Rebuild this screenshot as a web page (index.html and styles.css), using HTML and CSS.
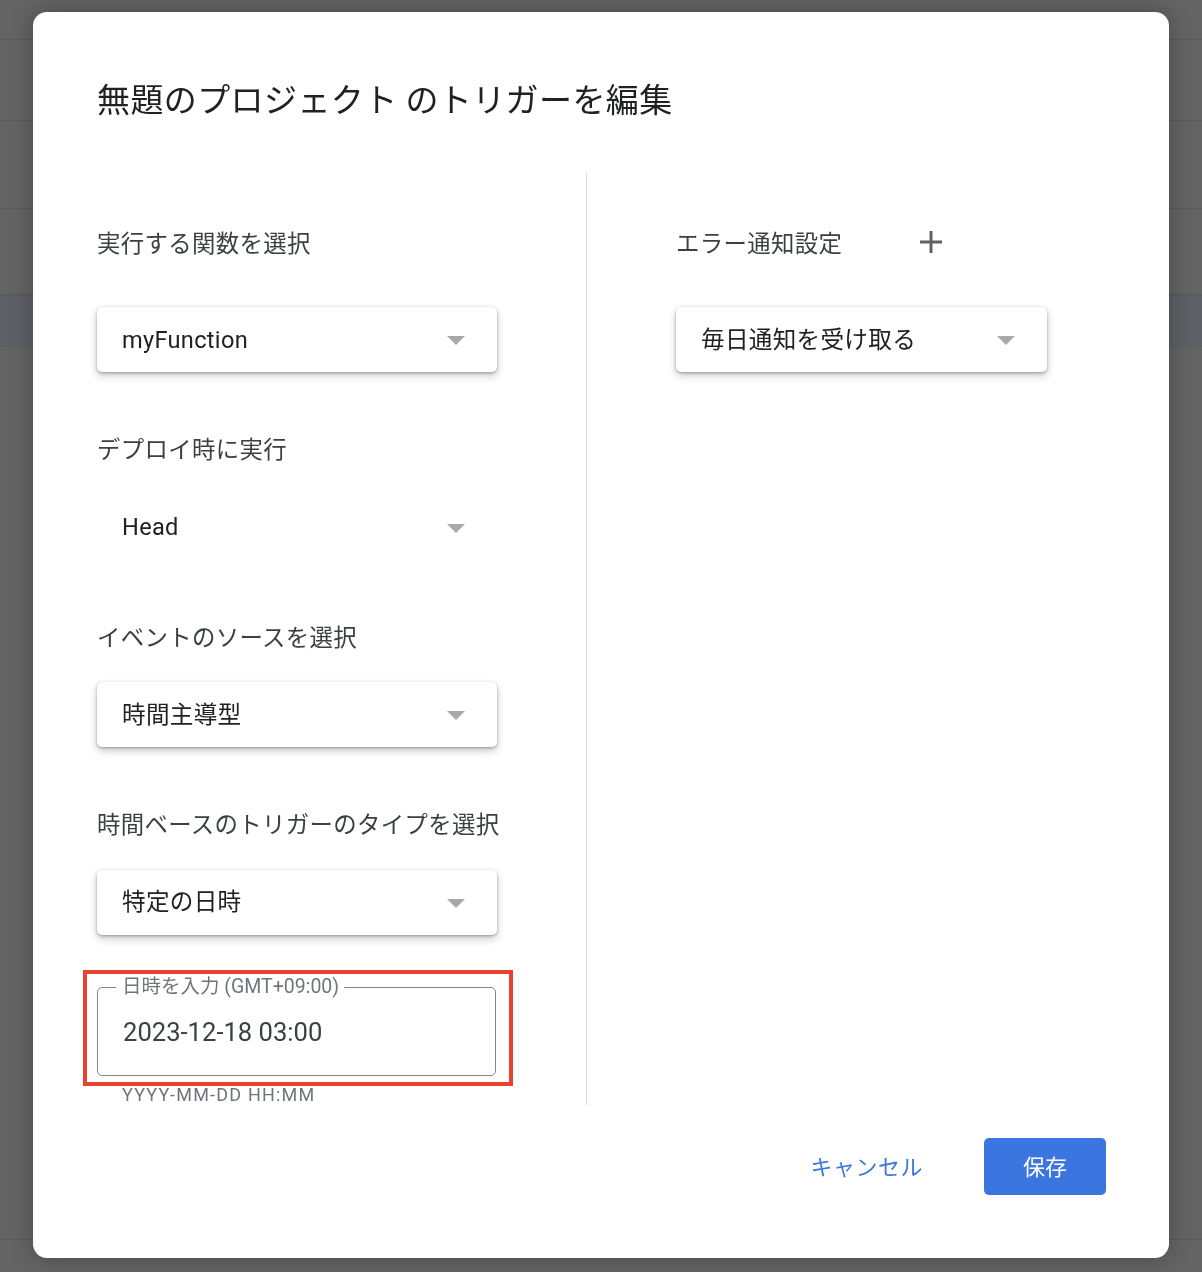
FILE: index.html
```html
<!DOCTYPE html>
<html lang="ja">
<head>
<meta charset="utf-8">
<title>トリガーを編集</title>
<link rel="stylesheet" href="styles.css">
</head>
<body>
<div class="page-bg">
  <div class="bg-row r1"></div>
  <div class="bg-row r2"></div>
  <div class="bg-row r3"></div>
  <div class="bg-row r4"></div>
  <div class="bg-row band"></div>
  <div class="bg-row r5"></div>
  <div class="bg-row r6"></div>
</div>

<div class="overlay">
  <div class="dialog">
    <h1 class="title">無題のプロジェクト のトリガーを編集</h1>
    <div class="body">
      <div class="col col-left">
        <div class="label first">実行する関数を選択</div>
        <div class="select raised"><span class="select-text">myFunction</span><span class="arrow"></span></div>

        <div class="label">デプロイ時に実行</div>
        <div class="select flat"><span class="select-text">Head</span><span class="arrow"></span></div>

        <div class="label">イベントのソースを選択</div>
        <div class="select raised"><span class="select-text">時間主導型</span><span class="arrow"></span></div>

        <div class="label">時間ベースのトリガーのタイプを選択</div>
        <div class="select raised"><span class="select-text">特定の日時</span><span class="arrow"></span></div>

        <div class="outlined">
          <div class="highlight"></div>
          <span class="notch-label">日時を入力 (GMT+09:00)</span>
          <div class="value">2023-12-18 03:00</div>
        </div>
        <div class="helper">YYYY-MM-DD HH:MM</div>
      </div>
      <div class="divider"></div>
      <div class="col col-right">
        <div class="label-row">
          <span class="label-inline">エラー通知設定</span>
          <svg class="plus" width="22" height="22" viewBox="0 0 22 22" aria-hidden="true"><path d="M11 0v22M0 11h22" stroke="#5f6368" stroke-width="3" fill="none"/></svg>
        </div>
        <div class="select raised narrow"><span class="select-text">毎日通知を受け取る</span><span class="arrow"></span></div>
      </div>
    </div>
    <div class="footer">
      <button class="btn btn-text">キャンセル</button>
      <button class="btn btn-primary">保存</button>
    </div>
  </div>
</div>
</body>
</html>
```

FILE: styles.css
```css
* { box-sizing: border-box; }

html, body {
  margin: 0;
  padding: 0;
  width: 1202px;
  height: 1272px;
  overflow: hidden;
}

body {
  background: #646464;
  font-family: Roboto, "Noto Sans CJK JP", sans-serif;
  color: #202124;
}

/* dimmed page underneath */
.page-bg {
  display: flex;
  flex-direction: column;
  width: 100%;
}
.bg-row { background: #646464; border-bottom: 1px solid #595959; }
.r1 { height: 40px; }
.r2 { height: 81px; }
.r3 { height: 88px; }
.r4 { height: 86px; }
.band { height: 52px; background: #5d6065; border-top: 1px solid #575a5e; border-bottom: 1px solid #5a5d61; }
.r5 { height: 893px; }
.r6 { height: 40px; border-bottom: none; }

/* modal overlay */
.overlay {
  position: fixed;
  inset: 0;
  display: flex;
  align-items: flex-start;
  justify-content: flex-start;
  padding: 12px 0 0 33px;
}

.dialog {
  width: 1136px;
  height: 1246px;
  background: #ffffff;
  border-radius: 14px;
  box-shadow: 0 0 24px rgba(0, 0, 0, 0.28);
  padding: 66px 63px 0 64px;
  display: flex;
  flex-direction: column;
}

.title {
  margin: 0;
  font-family: "Noto Sans CJK JP", sans-serif;
  font-weight: 400;
  font-size: 33px;
  line-height: 40px;
  height: 40px;
  color: #202124;
  letter-spacing: 0.4px;
}

.body {
  margin-top: 55px;
  display: flex;
  height: 932px;
}

.col-left {
  width: 489px;
  display: flex;
  flex-direction: column;
  padding-top: 53px;
}

.divider {
  width: 1px;
  background: #dadce0;
  align-self: stretch;
}

.col-right {
  padding-left: 89px;
  padding-top: 53px;
  display: flex;
  flex-direction: column;
}

.label {
  font-family: "Noto Sans CJK JP", sans-serif;
  font-size: 23.4px;
  line-height: 32px;
  height: 32px;
  color: #3c4043;
  letter-spacing: 0.35px;
  margin-top: 60px;
  margin-bottom: 30.5px;
}
.label.first { margin-top: 0; margin-bottom: 49px; }

.label-row {
  display: flex;
  align-items: center;
  height: 32px;
  margin-bottom: 49px;
}
.label-inline {
  font-family: "Noto Sans CJK JP", sans-serif;
  font-size: 23.4px;
  line-height: 32px;
  color: #3c4043;
  letter-spacing: 0.35px;
}
.plus { margin-left: 78px; }

.select {
  width: 400px;
  height: 65px;
  display: flex;
  align-items: center;
  justify-content: space-between;
  padding: 0 32px 0 25px;
  border-radius: 5px;
  background: #ffffff;
  flex: none;
}
.select.raised {
  box-shadow: 0 1px 3px rgba(0, 0, 0, 0.3), 0 4px 9px rgba(0, 0, 0, 0.2);
}
.select.narrow { width: 371px; }

.select-text {
  font-family: Roboto, "Noto Sans CJK JP", sans-serif;
  font-size: 23.6px;
  line-height: 32px;
  color: #202124;
  letter-spacing: 0.3px;
}

.arrow {
  width: 0;
  height: 0;
  border-left: 9px solid transparent;
  border-right: 9px solid transparent;
  border-top: 9px solid #a9a9a9;
  margin-top: 2px;
}

/* date input */
.outlined {
  position: relative;
  margin-top: 52px;
  width: 399px;
  height: 89px;
  border: 1px solid #80868b;
  border-radius: 5px;
  padding: 28px 24px 0 24px;
  flex: none;
}

.notch-label {
  position: absolute;
  left: 18px;
  top: -12px;
  padding: 0 5px 0 6px;
  background: #ffffff;
  font-family: Roboto, "Noto Sans CJK JP", sans-serif;
  font-size: 19.5px;
  line-height: 22px;
  color: #70757a;
}

.highlight {
  position: absolute;
  left: -15px;
  top: -18px;
  width: 430px;
  height: 116px;
  border: 4px solid #e8432c;
  pointer-events: none;
}

.value {
  font-family: Roboto, sans-serif;
  font-size: 25.6px;
  line-height: 32px;
  color: #3c4043;
  margin-left: 1px;
}

.helper {
  font-family: Roboto, sans-serif;
  font-size: 18px;
  line-height: 22px;
  color: #70757a;
  margin-top: 8px;
  margin-left: 25px;
  letter-spacing: 1.2px;
}

/* footer */
.footer {
  margin-top: 33px;
  display: flex;
  justify-content: flex-end;
  align-items: center;
}

.btn {
  font-family: "Noto Sans CJK JP", sans-serif;
  font-size: 22px;
  line-height: 28px;
  border: none;
  cursor: pointer;
  height: 57px;
  border-radius: 5px;
  padding-bottom: 5px;
}
.btn-text {
  background: transparent;
  color: #3b78dc;
  padding-left: 24px;
  padding-right: 24px;
  margin-right: 37px;
  letter-spacing: 0.5px;
}
.btn-primary {
  width: 122px;
  background: #3a75e0;
  color: #ffffff;
}
```
